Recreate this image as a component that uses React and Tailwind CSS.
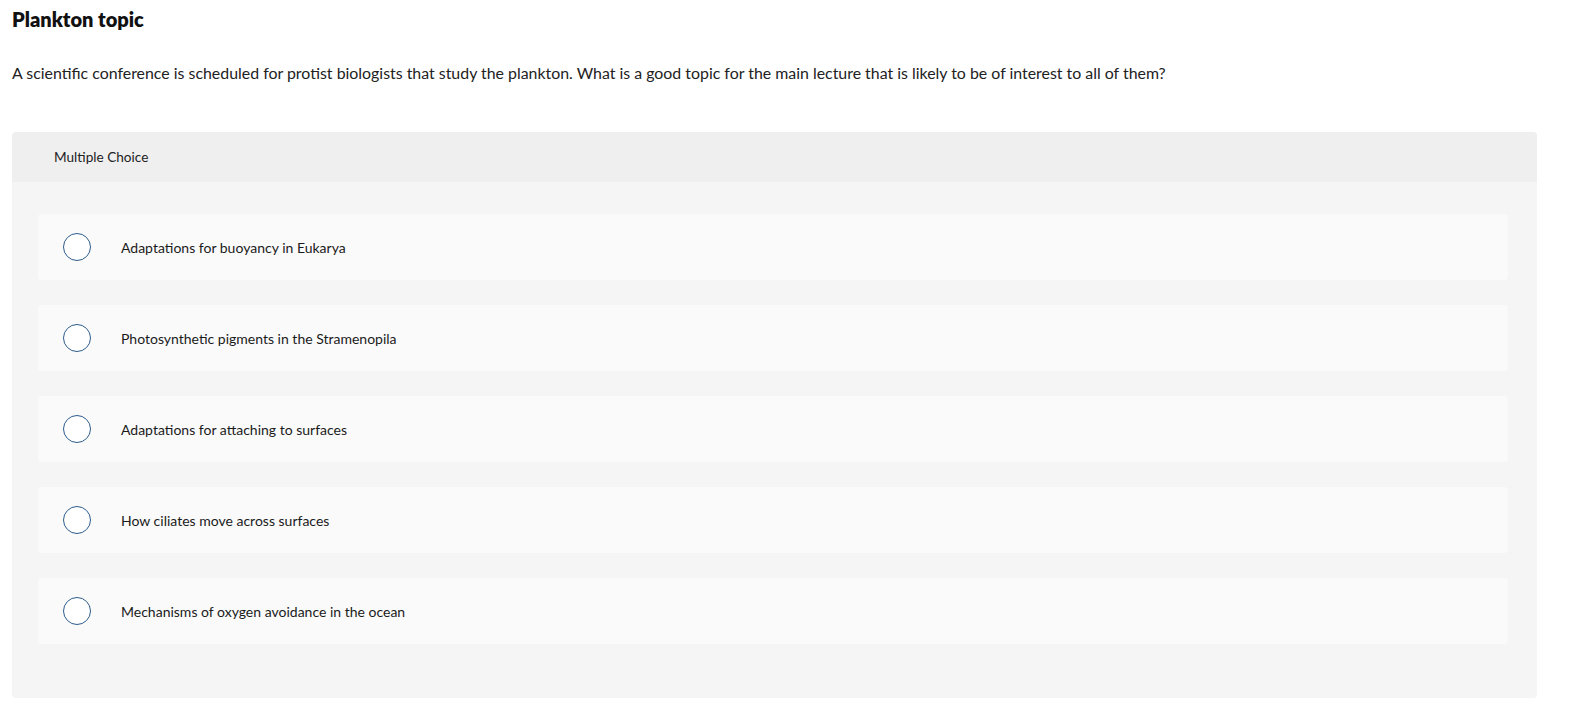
import React from 'react'

const choices = [
  'Adaptations for buoyancy in Eukarya',
  'Photosynthetic pigments in the Stramenopila',
  'Adaptations for attaching to surfaces',
  'How ciliates move across surfaces',
  'Mechanisms of oxygen avoidance in the ocean',
]

function Choice({ label }) {
  return (
    <label className="flex h-[66px] cursor-pointer items-center rounded bg-[#fafafa] pl-[25px]">
      <span className="h-[28px] w-[28px] shrink-0 rounded-full border-[1.5px] border-[#2d5c8c] bg-white" />
      <span className="ml-[30px] text-[14px] text-[#1a1a1a]">{label}</span>
    </label>
  )
}

export default function App() {
  return (
    <div className="min-h-[726px] bg-white px-3 pt-[7px] font-['Lato','Liberation_Sans',sans-serif] text-[#1a1a1a]">
      <h1 className="text-[20px] font-extrabold leading-[24px] text-[#111]">Plankton topic</h1>
      <p className="mt-[32px] text-[15.9px] leading-[20px] text-[#222]">
        A scientific conference is scheduled for protist biologists that study the plankton. What is a good topic for the main lecture that is likely to be of interest to all of them?
      </p>

      <section className="mt-[49px] mr-[28px] overflow-hidden rounded bg-[#f5f5f5]">
        <div className="flex h-[50px] items-center bg-[#efefef] pl-[42px] text-[13.6px] text-[#222]">
          Multiple Choice
        </div>
        <div className="flex flex-col gap-[25px] pl-[26px] pr-[29px] pb-[54px] pt-[32px]">
          {choices.map((c) => (
            <Choice key={c} label={c} />
          ))}
        </div>
      </section>
    </div>
  )
}
